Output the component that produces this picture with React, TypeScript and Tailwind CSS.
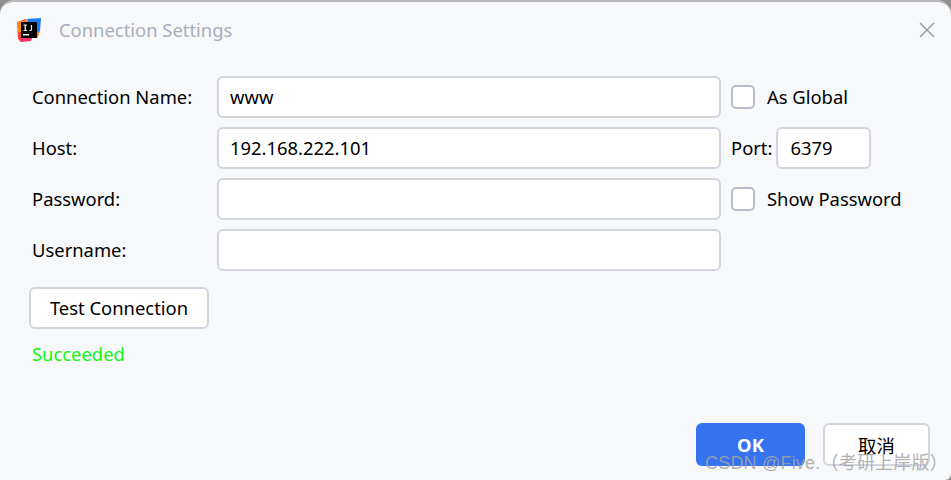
const font = "font-['Noto_Sans','Noto_Sans_CJK_SC',sans-serif]";

function TextField({ value = "" }: { value?: string }) {
  return (
    <div className="flex h-[42px] w-[504px] items-center rounded-[6px] border-2 border-[#d3d5de] bg-white px-[11px] text-[18.4px] text-black">
      {value}
    </div>
  );
}

function CheckField({ label }: { label: string }) {
  return (
    <div className="flex items-center">
      <div className="h-[24px] w-[24px] rounded-[5px] border-2 border-[#b9bcc8] bg-white" />
      <span className="ml-[12px] text-[18.4px] text-black">{label}</span>
    </div>
  );
}

function Logo() {
  return (
    <svg width="24" height="24" viewBox="0 0 24 24">
      <path d="M0 4 L9 1 L12 20 L4 24 L1 21 Z" fill="#f9473f" />
      <path d="M0 4 L10 2 L8 14 L1 14 Z" fill="#fb8a1f" />
      <path d="M2 21 L16 18 L14 23 L4 24 Z" fill="#f6336f" />
      <path d="M10 1 L24 0 L23 13 L17 19 L12 12 Z" fill="#1e7cf8" />
      <path d="M17 17 L23 13 L21 19 L15 20 Z" fill="#fb8a1f" />
      <rect x="4" y="4" width="16" height="16" fill="#000" />
      <rect x="6" y="16" width="6" height="1.5" fill="#fff" />
      <path d="M6.5 7 H10 M8.2 7 V12.5 M6.5 12.5 H10 M14.5 7 V11.5 Q14.5 12.5 12.5 12.5" stroke="#fff" strokeWidth="1.2" fill="none" />
    </svg>
  );
}

export default function App() {
  return (
    <div className={`${font} relative h-[480px] w-[951px] overflow-hidden bg-[#8f8f8f]`}>
      <div className="flex h-[480px] flex-col rounded-t-[14px] rounded-br-[6px] border-t-2 border-[#b9b9bc] bg-[#f7f8fa]">
        <header className="flex h-[57px] items-center pb-[2px] pl-[17px] pr-[15px]">
          <Logo />
          <h1 className="ml-[18px] text-[18.4px] font-normal text-[#a9adbb]">Connection Settings</h1>
          <svg className="ml-auto" width="18" height="18" viewBox="0 0 18 18">
            <path d="M2 2 L16 16 M16 2 L2 16" stroke="#9a9da5" strokeWidth="1.5" />
          </svg>
        </header>

        <div className="mt-[17px] grid grid-cols-[185px_504px_auto] items-center gap-y-[9px] pl-[32px] text-[18.4px] text-black">
          <label>Connection Name:</label>
          <TextField value="www" />
          <div className="ml-[10px]">
            <CheckField label="As Global" />
          </div>

          <label>Host:</label>
          <TextField value="192.168.222.101" />
          <div className="ml-[10px] flex items-center">
            <span>Port:</span>
            <div className="ml-[4px] flex h-[42px] w-[95px] items-center rounded-[6px] border-2 border-[#d3d5de] bg-white px-[12px]">
              6379
            </div>
          </div>

          <label>Password:</label>
          <TextField />
          <div className="ml-[10px]">
            <CheckField label="Show Password" />
          </div>

          <label>Username:</label>
          <TextField />
        </div>

        <div className="mt-[16px] pl-[29px]">
          <button className="h-[42px] w-[180px] rounded-[6px] border-2 border-[#d3d5de] bg-white text-[18.4px] text-black">
            Test Connection
          </button>
          <p className="mt-[11px] pl-[3px] text-[18.4px] leading-[28px] text-[#12f512]">Succeeded</p>
        </div>

        <footer className="mt-auto flex justify-end gap-[18px] pb-[14px] pr-[21px]">
          <button className="h-[43px] w-[109px] rounded-[6px] bg-[#3574f0] pt-[1px] text-[18.4px] font-bold text-white">OK</button>
          <button className="h-[43px] w-[107px] rounded-[6px] border-2 border-[#d3d5de] bg-white pt-[3px] text-[18.4px] text-black">取消</button>
        </footer>
      </div>

      <span className="absolute left-[705px] top-[452px] font-['Liberation_Sans','Noto_Sans_CJK_SC',sans-serif] text-[18px] leading-[22px] tracking-[0.2px] text-[#a3a3a3]/85">
        CSDN @Five.（考研上岸版）
      </span>
    </div>
  );
}
